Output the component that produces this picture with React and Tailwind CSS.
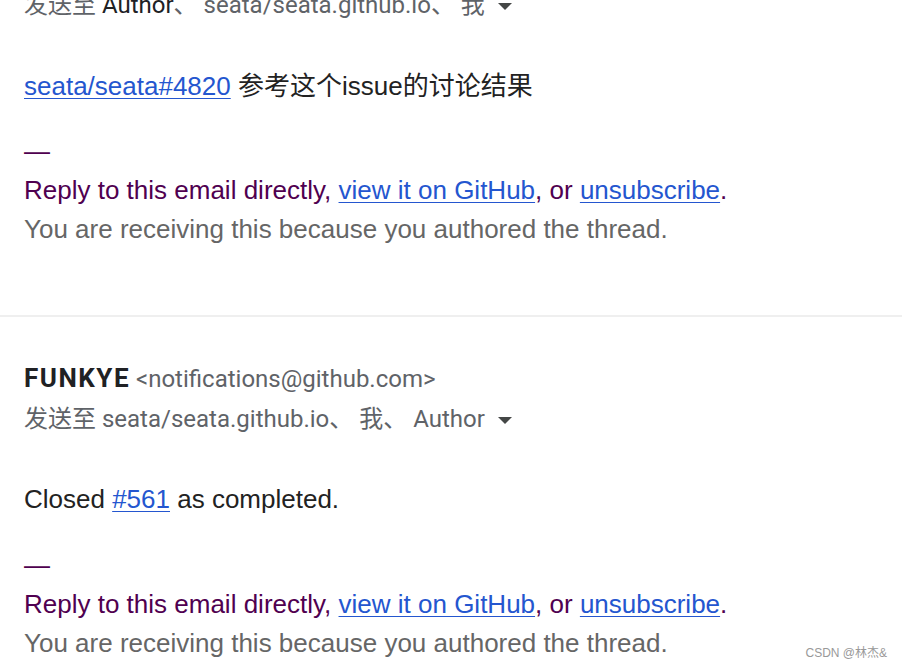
import React from "react";

const body = { fontFamily: '"Liberation Sans", Arial, "Noto Sans CJK SC", sans-serif' };
const head = { fontFamily: 'Roboto, "Noto Sans CJK SC", sans-serif' };

function Caret() {
  return (
    <svg width="16" height="10" viewBox="0 0 16 10" className="inline-block ml-[12px] align-middle">
      <path d="M1 1 L15 1 L8 8 Z" fill="#444746" />
    </svg>
  );
}

function Footer() {
  return (
    <div className="text-[26px] leading-[39px]" style={body}>
      <div className="text-[#500050]">—</div>
      <div className="text-[#500050]">
        Reply to this email directly,{" "}
        <a className="text-[#2456cf] underline underline-offset-[3px] decoration-1">view it on GitHub</a>, or{" "}
        <a className="text-[#2456cf] underline underline-offset-[3px] decoration-1">unsubscribe</a>.
      </div>
      <div className="text-[#666666]">You are receiving this because you authored the thread.</div>
    </div>
  );
}

export default function App() {
  return (
    <div className="relative w-[902px] h-[670px] overflow-hidden bg-white">
      <div className="px-[24px] -mt-[15px]">
        <div className="text-[24px] leading-[40px] text-[#5f6368] whitespace-nowrap" style={head}>
          发送至 <span className="text-[#202124]">Author</span>、 seata/seata.github.io、 我
          <Caret />
        </div>
        <div className="mt-[42px] text-[26px] leading-[39px] text-[#222222]" style={body}>
          <a className="text-[#2456cf] underline underline-offset-[3px] decoration-1">seata/seata#4820</a> 参考这个issue的讨论结果
        </div>
        <div className="mt-[26px]">
          <Footer />
        </div>
      </div>
      <div className="mt-[66px] h-[2px] bg-[#efefef]" />
      <div className="px-[24px] mt-[41px]">
        <div className="text-[24px] leading-[40px] whitespace-nowrap" style={head}>
          <span className="font-bold text-[26px] text-[#202124] tracking-[1.5px]">FUNKYE</span>{" "}
          <span className="text-[#5f6368]">&lt;notifications@github.com&gt;</span>
        </div>
        <div className="text-[24px] leading-[40px] text-[#5f6368] whitespace-nowrap" style={head}>
          发送至 seata/seata.github.io、 我、 Author
          <Caret />
        </div>
        <div className="mt-[41px] text-[26px] leading-[39px] text-[#222222]" style={body}>
          Closed <a className="text-[#2456cf] underline underline-offset-[3px] decoration-1">#561</a> as completed.
        </div>
        <div className="mt-[27px]">
          <Footer />
        </div>
      </div>
      <div
        className="absolute right-[15px] bottom-[8px] text-[12px] text-[#999999]"
        style={{ fontFamily: '"Liberation Sans", Arial, "Noto Sans CJK SC", sans-serif' }}
      >
        CSDN @林杰&amp;
      </div>
    </div>
  );
}
